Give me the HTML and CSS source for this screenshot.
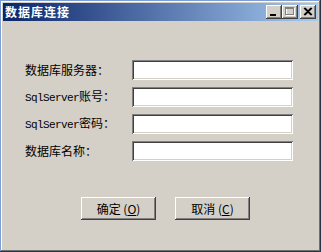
FILE: index.html
```html
<!DOCTYPE html>
<html lang="zh-CN">
<head>
    <meta charset="UTF-8">
    <title>数据库连接</title>
    <link rel="stylesheet" href="styles.css">
</head>
<body>
    <div class="window">
        <div class="title-bar">
            <span class="title">数据库连接</span>
            <div class="controls">
                <button class="ctl">
                    <svg width="16" height="14" viewBox="0 0 16 14"><rect x="4" y="9" width="6" height="2" fill="#000"/></svg>
                </button>
                <button class="ctl">
                    <svg width="16" height="14" viewBox="0 0 16 14"><rect x="4.5" y="3.5" width="8" height="7" fill="none" stroke="#fff"/><rect x="3.5" y="2.5" width="8" height="7" fill="none" stroke="#808080"/><rect x="3" y="2" width="9" height="2" fill="#808080"/></svg>
                </button>
                <button class="ctl close">
                    <svg width="16" height="14" viewBox="0 0 16 14"><path d="M4 3 L11 10 M5 3 L12 10 M11 3 L4 10 M12 3 L5 10" stroke="#000" stroke-width="1.2"/></svg>
                </button>
            </div>
        </div>
        <div class="content">
            <form class="form">
                <label>数据库服务器：</label>
                <input type="text" class="field">
                <label><span class="latin">SqlServer</span>账号：</label>
                <input type="text" class="field">
                <label><span class="latin">SqlServer</span>密码：</label>
                <input type="password" class="field">
                <label>数据库名称：</label>
                <input type="text" class="field">
            </form>
            <div class="actions">
                <button class="btn">确定 (<u>O</u>)</button>
                <button class="btn">取消 (<u>C</u>)</button>
            </div>
        </div>
    </div>
</body>
</html>
```

FILE: styles.css
```css
* {
    box-sizing: border-box;
    margin: 0;
    padding: 0;
}
body {
    font-family: "Liberation Sans", "Noto Sans CJK SC", sans-serif;
    font-size: 12px;
    background: #d4d0c8;
}
/* window frame */
.window {
    width: 321px;
    height: 252px;
    padding: 3px;
    background: #d4d0c8;
    box-shadow: inset -1px -1px #2a3348, inset 1px 1px #7e9fd6,
                inset -2px -2px #707070, inset 2px 2px #ffffff;
    display: flex;
    flex-direction: column;
}
.title-bar {
    height: 18px;
    background: linear-gradient(to right, #0a246a, #a6caf0);
    display: flex;
    align-items: center;
    justify-content: space-between;
    padding: 0 2px;
}
.title {
    color: #fff;
    font-weight: bold;
    font-size: 12px;
    font-family: "Noto Sans CJK SC", sans-serif;
    line-height: 18px;
    letter-spacing: 1px;
}
.controls {
    display: flex;
}
.ctl {
    width: 16px;
    height: 14px;
    border: none;
    background: #d4d0c8;
    box-shadow: inset -1px -1px #404040, inset 1px 1px #ffffff,
                inset -2px -2px #808080, inset 2px 2px #d4d0c8;
    display: block;
}
.ctl svg {
    display: block;
}
.close {
    margin-left: 2px;
}
/* form */
.content {
    flex: 1;
    padding: 39px 0 0 22px;
}
.form {
    display: grid;
    grid-template-columns: 107px 161px;
    grid-auto-rows: 20px;
    row-gap: 7px;
    align-items: center;
}
.form label {
    color: #000;
    font-family: "Noto Sans CJK SC", sans-serif;
    font-size: 12px;
    line-height: 14px;
}
.latin {
    font-family: "Liberation Mono", monospace;
    font-size: 11px;
    letter-spacing: -0.6px;
}
.field {
    height: 20px;
    width: 161px;
    border: none;
    background: #fff;
    box-shadow: inset 1px 1px #808080, inset -1px -1px #ffffff,
                inset 2px 2px #404040, inset -2px -2px #d4d0c8;
    outline: none;
}
.actions {
    display: flex;
    gap: 19px;
    margin: 36px 0 0 56px;
}
.btn {
    width: 75px;
    height: 23px;
    border: none;
    background: #d4d0c8;
    font-family: "Noto Sans CJK SC", sans-serif;
    font-size: 12px;
    color: #000;
    box-shadow: inset -1px -1px #404040, inset 1px 1px #ffffff,
                inset -2px -2px #808080, inset 2px 2px #d4d0c8;
}
```
